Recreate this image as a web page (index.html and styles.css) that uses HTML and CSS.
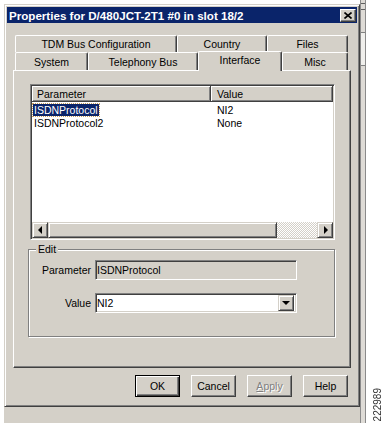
FILE: index.html
```html
<!DOCTYPE html>
<html lang="en">
<head>
  <meta charset="UTF-8" />
  <meta name="viewport" content="width=device-width, initial-scale=1.0"/>
  <title>Properties for D/480JCT-2T1 #0 in slot 18/2</title>
  <link rel="stylesheet" href="styles.css">
</head>
<body>

<div class="screen">
  <div class="desk">
    <div class="window">
      <div class="titlebar">
        <span class="title">Properties for D/480JCT-2T1 #0 in slot 18/2</span>
        <button class="close" aria-label="Close">
          <svg width="8" height="7" viewBox="0 0 8 7"><path d="M0.5 0.5 L7.5 6.5 M7.5 0.5 L0.5 6.5" stroke="#000" stroke-width="1.6" fill="none"/></svg>
        </button>
      </div>

      <div class="content">
        <div class="tabs">
          <div class="tab-row back">
            <div class="tab" style="width:162px">TDM Bus Configuration</div>
            <div class="tab" style="width:90px">Country</div>
            <div class="tab" style="width:81px">Files</div>
          </div>
          <div class="tab-row front">
            <div class="tab" style="width:73px">System</div>
            <div class="tab" style="width:110px">Telephony Bus</div>
            <div class="tab active" style="width:84px">Interface</div>
            <div class="tab" style="width:66px">Misc</div>
          </div>
        </div>

        <div class="panel">
          <div class="listview">
            <div class="lv-header">
              <div class="hcell first">Parameter</div>
              <div class="hcell">Value</div>
            </div>
            <div class="lv-body">
              <div class="lv-row">
                <div class="cell first"><span class="sel">ISDNProtocol</span></div>
                <div class="cell">NI2</div>
              </div>
              <div class="lv-row">
                <div class="cell first"><span class="plain">ISDNProtocol2</span></div>
                <div class="cell">None</div>
              </div>
            </div>
            <div class="hscroll">
              <div class="sb-btn"><span class="arrow-left"></span></div>
              <div class="sb-thumb"></div>
              <div class="sb-track"></div>
              <div class="sb-btn"><span class="arrow-right"></span></div>
            </div>
          </div>

          <div class="group">
            <span class="legend">Edit</span>
            <div class="field-row first-row">
              <label class="field-label">Parameter</label>
              <div class="field readonly">ISDNProtocol</div>
            </div>
            <div class="field-row">
              <label class="field-label">Value</label>
              <div class="field combo">
                <span class="combo-text">NI2</span>
                <span class="combo-btn"><span class="arrow-down"></span></span>
              </div>
            </div>
          </div>
        </div>

        <div class="buttons">
          <button class="btn default">OK</button>
          <button class="btn">Cancel</button>
          <button class="btn disabled"><u>A</u>pply</button>
          <button class="btn">Help</button>
        </div>
      </div>
    </div>
    <div class="desk-bottom"></div>
  </div>

  <div class="strip">
    <div class="strip-cap"></div>
    <div class="strip-thumb"></div>
  </div>

  <div class="figno">222989</div>
</div>

</body>
</html>
```

FILE: styles.css
```css
body { margin: 0; background: #fff; font-family: "Liberation Sans", Arial, sans-serif; font-size: 10.5px; color: #000; }
.screen { display: flex; height: 423px; padding-left: 4px; box-sizing: border-box; }
.desk { display: flex; flex-direction: column; width: 356px; padding-top: 4px; }

/* dialog frame */
.window {
  box-sizing: border-box; height: 403px; background: #d4d0c8; padding: 2px;
  border: 1px solid; border-color: #d4d0c8 #404040 #404040 #d4d0c8;
  box-shadow: inset 1px 1px #fff, inset -1px -1px #808080;
  display: flex; flex-direction: column;
}
.titlebar { height: 16px; background: #0a246a; color: #fff; display: flex; align-items: center; justify-content: space-between; padding: 0 1px 0 2px; }
.title { font-weight: bold; font-size: 11.6px; white-space: nowrap; }
.close {
  width: 16px; height: 13px; padding: 0; background: #d4d0c8; display: flex; align-items: center; justify-content: center;
  border: 1px solid; border-color: #fff #404040 #404040 #fff; box-shadow: inset -1px -1px #808080;
}
.content { display: flex; flex-direction: column; padding: 12px 6px 0; }

/* tabs */
.tab-row { display: flex; margin-left: 2px; }
.tab {
  box-sizing: border-box; display: flex; align-items: center; justify-content: center; background: #d4d0c8;
  border-top: 1px solid #fff; border-left: 1px solid #fff; border-right: 1px solid #404040;
  box-shadow: inset -1px 0 #808080; border-radius: 2px 2px 0 0; white-space: nowrap;
}
.back .tab { height: 17px; }
.front { height: 18px; align-items: flex-end; }
.front .tab { height: 18px; }
.front .tab.active { height: 20px; margin-bottom: -1px; padding-bottom: 3px; position: relative; z-index: 1; }

.panel {
  box-sizing: border-box; height: 298px; padding: 13px 15px 0 14px;
  border: 1px solid; border-color: #fff #404040 #404040 #fff; box-shadow: inset -1px -1px #808080;
  display: flex; flex-direction: column;
}

/* list view */
.listview {
  box-sizing: border-box; height: 156px; margin-left: 2px; padding: 1px; background: #fff;
  border: 1px solid; border-color: #808080 #fff #fff #808080;
  box-shadow: inset 1px 1px #404040, inset -1px -1px #d4d0c8;
  display: flex; flex-direction: column;
}
.lv-header { display: flex; height: 16px; background: #d4d0c8; }
.hcell {
  box-sizing: border-box; flex: 1; padding-left: 6px; display: flex; align-items: center;
  border-right: 1px solid #404040; border-bottom: 1px solid #404040;
  box-shadow: inset 1px 1px #fff, inset -1px -1px #808080;
}
.hcell.first { flex: 0 0 179px; padding-left: 5px; }
.lv-body { flex: 1; padding-top: 1px; }
.lv-row { display: flex; height: 13px; align-items: center; }
.cell { flex: 1; padding-left: 6px; white-space: nowrap; }
.cell.first { flex: 0 0 179px; padding-left: 1px; box-sizing: border-box; }
.sel { background: #0a246a; color: #fff; padding: 0 1px; outline: 1px dotted #c8a060; }
.plain { padding: 0 1px; }

.hscroll { display: flex; height: 16px; }
.sb-btn, .sb-thumb {
  box-sizing: border-box; background: #d4d0c8;
  border: 1px solid; border-color: #d4d0c8 #404040 #404040 #d4d0c8;
  box-shadow: inset 1px 1px #fff, inset -1px -1px #808080;
}
.sb-btn { width: 16px; display: flex; align-items: center; justify-content: center; }
.sb-thumb { width: 229px; }
.sb-track { flex: 1; background: repeating-conic-gradient(#fff 0 25%, #d4d0c8 0 50%) 0 0 / 2px 2px; }
.arrow-left { width: 0; height: 0; border-top: 4px solid transparent; border-bottom: 4px solid transparent; border-right: 4px solid #000; margin-right: 1px; }
.arrow-right { width: 0; height: 0; border-top: 4px solid transparent; border-bottom: 4px solid transparent; border-left: 4px solid #000; margin-left: 1px; }
.arrow-down { width: 0; height: 0; border-left: 4px solid transparent; border-right: 4px solid transparent; border-top: 4px solid #000; }

/* edit group */
.group {
  box-sizing: border-box; height: 88px; margin-top: 9px; border: 1px solid #808080;
  box-shadow: 1px 1px #fff, inset 1px 1px #fff; display: flex; flex-direction: column;
}
.legend { align-self: flex-start; margin: -7px 0 0 7px; padding: 0 2px; background: #d4d0c8; line-height: 12px; }
.field-row { display: flex; align-items: center; margin-top: 13px; }
.field-row.first-row { margin-top: 5px; }
.field-label { box-sizing: border-box; width: 66px; padding-right: 4px; text-align: right; }
.field {
  box-sizing: border-box; width: 202px; height: 20px; padding: 2px; display: flex; align-items: center;
  border: 1px solid; border-color: #808080 #fff #fff #808080;
  box-shadow: inset 1px 1px #404040, inset -1px -1px #d4d0c8;
}
.field.readonly { background: #d4d0c8; padding-left: 1px; }
.field.combo { background: #fff; justify-content: space-between; padding-left: 1px; }
.combo-btn {
  box-sizing: border-box; width: 16px; height: 16px; background: #d4d0c8; display: flex; align-items: center; justify-content: center;
  border: 1px solid; border-color: #d4d0c8 #404040 #404040 #d4d0c8;
  box-shadow: inset 1px 1px #fff, inset -1px -1px #808080;
}

/* dialog buttons */
.buttons { display: flex; justify-content: flex-end; gap: 11px; margin: 7px 3px 0 0; }
.btn {
  box-sizing: border-box; width: 45px; height: 22px; padding: 0; background: #d4d0c8; font: inherit; color: #000;
  border: 1px solid; border-color: #fff #404040 #404040 #fff; box-shadow: inset -1px -1px #808080;
}
.btn.default { border-color: #000; box-shadow: inset 1px 1px #fff, inset -1px -1px #404040, inset -2px -2px #808080; }
.btn.disabled { color: #808080; text-shadow: 1px 1px #fff; }

.desk-bottom { flex: 1; background: #d4d0c8; }
.strip { box-sizing: border-box; width: 6px; background: #dedbd6; border-left: 1px solid #8a8a8a; border-right: 1px solid #8a8a8a; display: flex; flex-direction: column; }
.strip-cap { height: 5px; margin-top: 3px; border-top: 1px solid #606060; border-bottom: 1px solid #606060; }
.strip-thumb { height: 32px; margin-top: 22px; border-top: 1px solid #808080; border-bottom: 1px solid #808080; background: #f0efec; }
.figno { align-self: flex-end; margin: 0 0 2px 6px; writing-mode: vertical-rl; transform: rotate(180deg); font-size: 10px; color: #333; }
```
